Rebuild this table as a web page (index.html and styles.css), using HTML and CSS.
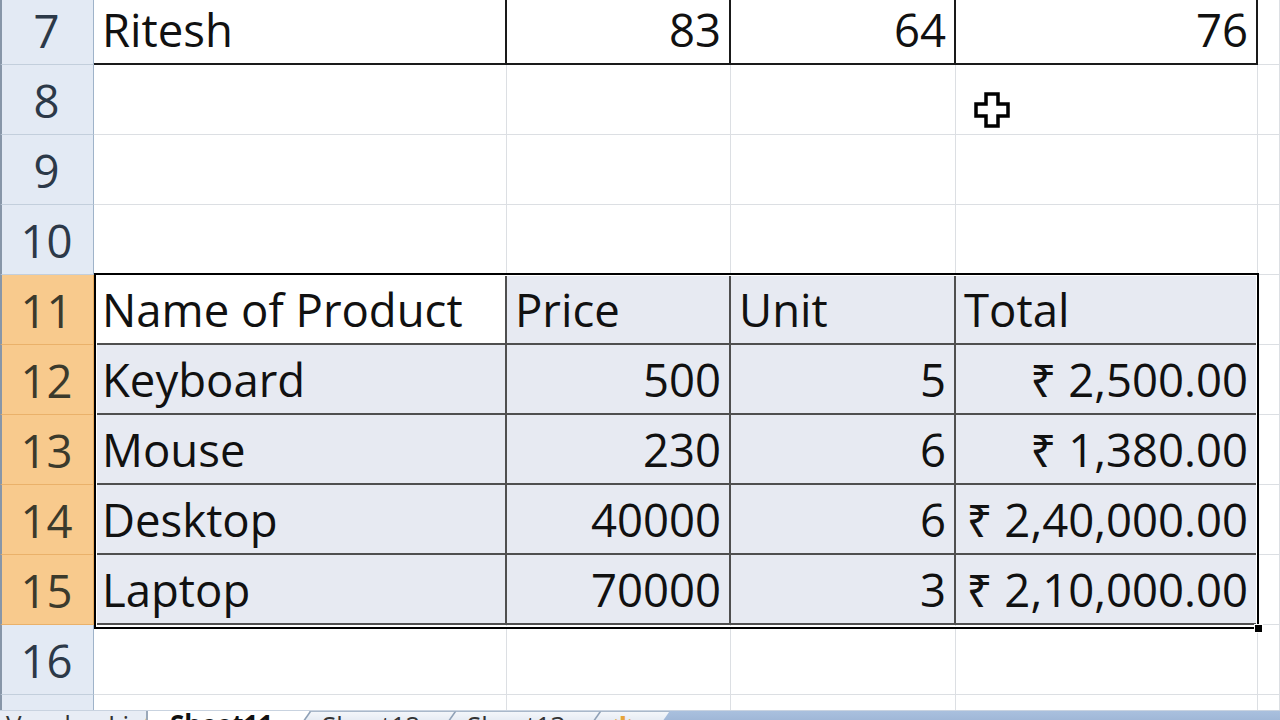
FILE: index.html
```html
<!DOCTYPE html>
<html>
<head>
<meta charset="utf-8">
<link rel="stylesheet" href="styles.css">
</head>
<body>
<div class="wrap">
  <div class="sheet">
    <div class="rh">7</div>
    <div class="c r7">Ritesh</div>
    <div class="c r7 num">83</div>
    <div class="c r7 num">64</div>
    <div class="c r7 num">76</div>
    <div class="c"></div>

    <div class="rh">8</div>
    <div class="c"></div><div class="c"></div><div class="c"></div><div class="c"></div><div class="c"></div>

    <div class="rh">9</div>
    <div class="c"></div><div class="c"></div><div class="c"></div><div class="c"></div><div class="c"></div>

    <div class="rh">10</div>
    <div class="c top"></div><div class="c top"></div><div class="c top"></div><div class="c top"></div><div class="c"></div>

    <div class="rh sel">11</div>
    <div class="c t active">Name of Product</div>
    <div class="c t">Price</div>
    <div class="c t">Unit</div>
    <div class="c t">Total</div>
    <div class="c"></div>

    <div class="rh sel">12</div>
    <div class="c t">Keyboard</div>
    <div class="c t num">500</div>
    <div class="c t num">5</div>
    <div class="c t num">₹ 2,500.00</div>
    <div class="c"></div>

    <div class="rh sel">13</div>
    <div class="c t">Mouse</div>
    <div class="c t num">230</div>
    <div class="c t num">6</div>
    <div class="c t num">₹ 1,380.00</div>
    <div class="c"></div>

    <div class="rh sel">14</div>
    <div class="c t">Desktop</div>
    <div class="c t num">40000</div>
    <div class="c t num">6</div>
    <div class="c t num">₹ 2,40,000.00</div>
    <div class="c"></div>

    <div class="rh sel">15</div>
    <div class="c t">Laptop</div>
    <div class="c t num">70000</div>
    <div class="c t num">3</div>
    <div class="c t num">₹ 2,10,000.00</div>
    <div class="c"></div>

    <div class="rh">16</div>
    <div class="c"></div><div class="c"></div><div class="c"></div><div class="c"></div><div class="c"></div>

    <div class="rh"></div>
    <div class="c"></div><div class="c"></div><div class="c"></div><div class="c"></div><div class="c"></div>
  </div>
  <div class="selection"><span class="handle"></span></div>
  <svg class="cursor" width="38" height="38" viewBox="0 0 38 38">
    <polygon points="12,2 24,2 24,12 34,12 34,24 24,24 24,34 12,34 12,24 2,24 2,12 12,12" fill="#fff" stroke="#000" stroke-width="3.5" stroke-linejoin="miter"/>
  </svg>
</div>
<div class="tabs">
  <div class="tab first">Vendor List</div>
  <div class="tab cur">Sheet11</div>
  <div class="tab slant"><span class="lbl">Sheet12</span></div>
  <div class="tab slant"><span class="lbl">Sheet13</span></div>
  <div class="tab slant ins"><span class="lbl"><span class="star">✱</span>▭</span></div>
  <div class="bar"></div>
</div>
</body>
</html>
```

FILE: styles.css
```css
* { box-sizing: border-box; }
html, body { margin: 0; padding: 0; }
body {
  width: 1280px;
  height: 720px;
  overflow: hidden;
  background: #fff;
  font-family: "Open Sans", "Noto Sans", "DejaVu Sans", sans-serif;
}
.wrap {
  position: relative;
  height: 710px;
  overflow: hidden;
}
.sheet {
  display: grid;
  grid-template-columns: 94px 413px 224px 225px 302px 22px;
  grid-template-rows: repeat(10, 70px) 30px;
  margin-top: -5px;
}
.rh {
  background: #e3eaf4;
  border-left: 2px solid #8796a8;
  border-right: 1px solid #9fb3c9;
  border-bottom: 1px solid #c3cfdc;
  color: #2c3948;
  font-size: 45.5px;
  line-height: 1;
  display: flex;
  align-items: flex-end;
  justify-content: center;
  padding-bottom: 11px;
  padding-right: 2px;
}
.rh.sel {
  background: #f8ca8d;
  border-right-color: #e7a85a;
  border-bottom-color: #eab16a;
  color: #3b3a2c;
}
.c {
  border-right: 1px solid #dcdfe3;
  border-bottom: 1px solid #dcdfe3;
  font-size: 45.5px;
  line-height: 1;
  color: #111;
  display: flex;
  align-items: flex-end;
  padding: 0 8px 11px 8px;
  white-space: nowrap;
}
.num { justify-content: flex-end; }
.r7 {
  border-bottom: 2px solid #1a1a1a;
  border-right: 2px solid #1a1a1a;
}
.top { border-bottom: 2px solid #333; }
.t {
  background: #e7eaf2;
  border-right: 2px solid #4f4f4f;
  border-bottom: 2px solid #4f4f4f;
}
.t.active { background: #fff; }
.selection {
  position: absolute;
  left: 94px;
  top: 273px;
  width: 1165px;
  height: 356px;
  border: 2px solid #000;
  box-shadow: inset 0 0 0 1px #fff;
  pointer-events: none;
}
.handle {
  position: absolute;
  right: -6px;
  bottom: -6px;
  width: 9px;
  height: 9px;
  background: #000;
  border: 1px solid #fff;
}
.cursor {
  position: absolute;
  left: 974px;
  top: 92px;
}
.tabs {
  height: 10px;
  display: flex;
  align-items: flex-start;
  overflow: hidden;
  background: #fff;
  border-top: 1px solid #c9d3e0;
}
.tab {
  height: 14px;
  font-size: 26px;
  line-height: 1;
  color: #333;
  white-space: nowrap;
  overflow: hidden;
}
.tab.first {
  width: 148px;
  background: #e8edf5;
  border-right: 2px solid #9aa8b9;
  padding-left: 6px;
  letter-spacing: 1px;
}
.tab.cur {
  width: 152px;
  background: #fff;
  font-weight: bold;
  color: #111;
  padding-left: 22px;
}
.tab.slant {
  width: 145px;
  background: linear-gradient(#f3f6fa, #dfe6f0);
  border-left: 2px solid #8fa1b7;
  border-top: 1px solid #a9b8ca;
  transform: skewX(-35deg);
  transform-origin: bottom left;
  padding-left: 20px;
}
.lbl {
  display: inline-block;
  transform: skewX(35deg);
}
.tab.ins {
  width: 70px;
  color: #7f8ea0;
}
.star { color: #e7a43a; }
.bar {
  flex: 1;
  height: 14px;
  background: linear-gradient(#a9c0de, #9bb3d4);
}
```
